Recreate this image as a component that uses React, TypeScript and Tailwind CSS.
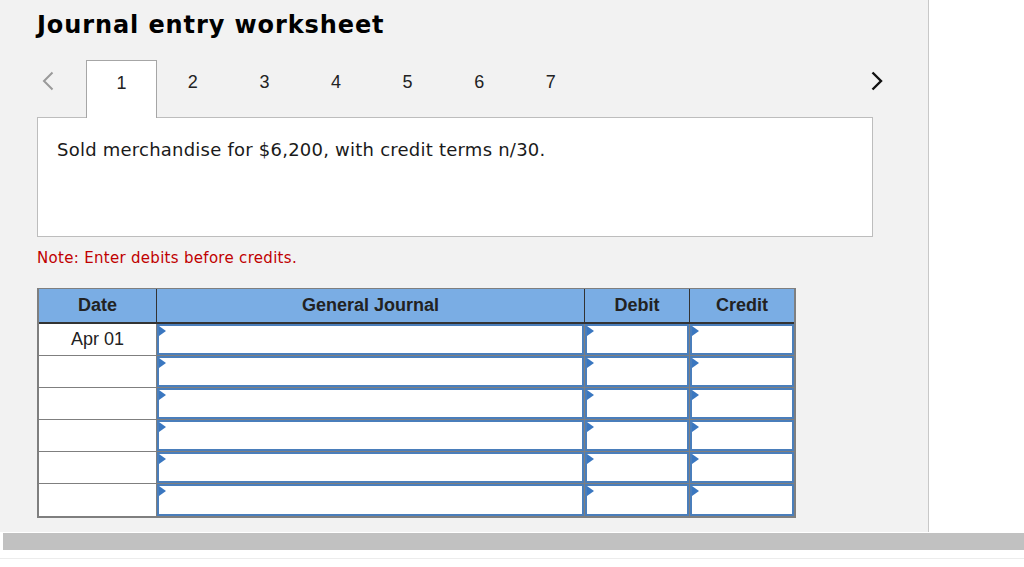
const verdana = { fontFamily: '"DejaVu Sans", Verdana, sans-serif' }
const arial = { fontFamily: '"Liberation Sans", Arial, sans-serif' }

const tabs = [1, 2, 3, 4, 5, 6, 7]
const rows = ['Apr 01', '', '', '', '', '']

function Flag() {
  return (
    <span className="absolute left-0 top-0 h-0 w-0 border-y-[5px] border-l-[7px] border-y-transparent border-l-[#3a77c0]" />
  )
}

function InputCell({ last, border }: { last?: boolean; border: boolean }) {
  return (
    <div className={`h-full ${last ? '' : 'border-r border-[#7f7f7f]'} ${border ? 'border-b border-[#7f7f7f]' : ''}`}>
      <div className="relative h-full border-2 border-[#4a7ebb] bg-white">
        <Flag />
      </div>
    </div>
  )
}

export default function App() {
  return (
    <div className="h-[567px] w-[1024px] overflow-hidden bg-white">
      <div className="h-[532px] w-[929px] border-r border-[#c8c8c8] bg-[#f2f2f2] pl-[37px] pt-[11px]">
        <h1 className="text-[24px] font-bold leading-[28px] tracking-[0.9px] text-black" style={verdana}>
          Journal entry worksheet
        </h1>

        <div className="mt-[21px] flex h-[57px] w-[846px]" style={arial}>
          <div className="w-[49px] pl-[5px] pt-[11px]">
            <svg width="12" height="20" viewBox="0 0 12 20" fill="none">
              <path d="M10.5 1.5 L2 10 L10.5 18.5" stroke="#9a9a9a" strokeWidth="2" />
            </svg>
          </div>
          {tabs.map((n) =>
            n === 1 ? (
              <div
                key={n}
                className="relative z-10 -mb-px h-[58px] w-[71px] border border-b-0 border-[#a6a6a6] bg-white pt-[12px] text-center text-[18px] leading-[20px] text-[#222]"
              >
                {n}
              </div>
            ) : (
              <div key={n} className="w-[71.6px] pt-[12px] text-center text-[18px] leading-[20px] text-[#222]">
                {n}
              </div>
            )
          )}
          <div className="flex-1" />
          <div className="pt-[11px]">
            <svg width="12" height="20" viewBox="0 0 12 20" fill="none">
              <path d="M1.5 1.5 L10 10 L1.5 18.5" stroke="#111" strokeWidth="2.4" />
            </svg>
          </div>
        </div>

        <div className="h-[120px] w-[836px] border border-[#bdbdbd] bg-white pl-[19px] pt-[21px]">
          <p className="text-[18px] leading-[22px] tracking-[0.23px] text-[#1a1a1a]" style={verdana}>
            Sold merchandise for $6,200, with credit terms n/30.
          </p>
        </div>

        <p className="mt-[12px] text-[15px] leading-[18px] tracking-[0.3px] text-[#c00000]" style={verdana}>
          Note: Enter debits before credits.
        </p>

        <div
          className="mt-[21px] w-[759px] border-2 border-t border-[#7f7f7f] bg-white"
          style={arial}
        >
          <div className="grid h-[35px] grid-cols-[118px_428px_105px_104px] border-b-2 border-[#333] bg-[#7aade4] text-[18px] font-bold text-[#222]">
            <div className="flex items-center justify-center border-r border-[#333]">Date</div>
            <div className="flex items-center justify-center border-r border-[#333]">General Journal</div>
            <div className="flex items-center justify-center border-r border-[#333]">Debit</div>
            <div className="flex items-center justify-center">Credit</div>
          </div>
          {rows.map((d, i) => {
            const border = i < rows.length - 1
            return (
              <div key={i} className="grid h-[32px] grid-cols-[118px_428px_105px_104px]">
                <div
                  className={`flex items-center justify-center border-r border-[#7f7f7f] text-[18px] text-[#222] ${border ? 'border-b' : ''}`}
                >
                  {d}
                </div>
                <InputCell border={border} />
                <InputCell border={border} />
                <InputCell border={border} last />
              </div>
            )
          })}
        </div>
      </div>
      <div className="ml-[3px] mt-px h-[17px] bg-[#c1c1c1]" />
      <div className="mt-[8px] h-px bg-[#ececec]" />
    </div>
  )
}
